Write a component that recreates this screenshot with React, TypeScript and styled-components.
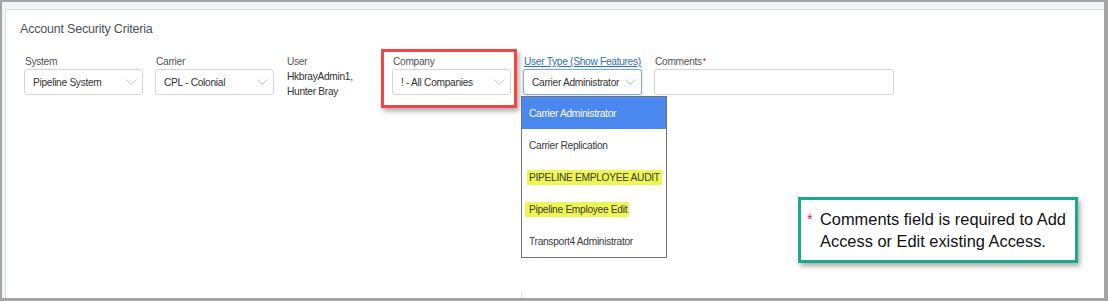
import React from "react";
import styled, { createGlobalStyle } from "styled-components";

const Global = createGlobalStyle`
  html, body { margin: 0; padding: 0; background: #fff; }
  * { box-sizing: border-box; }
  body { font-family: "Liberation Sans", Arial, sans-serif; }
`;

const Frame = styled.div`
  width: 1108px;
  height: 301px;
  border: 2px solid #a5a5a5;
  border-right-width: 4px;
  border-bottom-width: 3px;
  background: #f3f4f6;
  padding: 7px 0 0 3px;
  display: flex;
`;

const Panel = styled.div`
  flex: 1;
  position: relative;
  background: #fff;
  border-top: 1px solid #dadee3;
  border-left: 1px solid #dbe2ea;
  padding: 11px 0 0 14px;
`;

const Title = styled.div`
  font-size: 12.5px;
  letter-spacing: -0.2px;
  line-height: 16px;
  color: #4c5157;
`;

const FieldRow = styled.div`
  display: grid;
  grid-template-columns: 119px 119px 94px 119px 119px 240px;
  column-gap: 12px;
  align-items: start;
  margin: 18px 0 0 4px;
  font-size: 10.2px;
  letter-spacing: -0.3px;
`;

const Cell = styled.div`
  position: relative;
`;

const Label = styled.div<{ $link?: boolean }>`
  line-height: 13px;
  height: 14px;
  padding-left: 1px;
  color: ${(p) => (p.$link ? "#2d6fb8" : "#555")};
  text-decoration: ${(p) => (p.$link ? "underline" : "none")};
  white-space: nowrap;
`;

const Req = styled.span`
  color: #c8102e;
  font-size: 9px;
  vertical-align: top;
  margin-left: 1px;
`;

const SelectBox = styled.div<{ $focus?: boolean }>`
  height: 26px;
  border: 1px solid ${(p) => (p.$focus ? "#86a9d6" : "#d5d5d5")};
  border-radius: 3px;
  box-shadow: ${(p) => (p.$focus ? "0 0 2px rgba(80,130,200,0.45)" : "none")};
  display: flex;
  align-items: center;
  justify-content: space-between;
  padding: 0 5px 0 8px;
  color: #333;
  background: #fff;
  white-space: nowrap;
`;

const TextInput = styled.div`
  height: 26px;
  border: 1px solid #d5d5d5;
  border-radius: 3px;
  background: #fff;
`;

const UserText = styled.div`
  line-height: 15px;
  color: #333;
  padding-left: 1px;
`;

const Chevron = () => (
  <svg width="11" height="7" viewBox="0 0 11 7">
    <polyline points="0.5,0.5 5.5,5.5 10.5,0.5" fill="none" stroke="#c4c4c4" strokeWidth="1" />
  </svg>
);

const RedFrame = styled.div`
  position: absolute;
  left: -11px;
  top: -6px;
  width: 136px;
  height: 59px;
  border: 3px solid #ef4646;
  box-shadow: 2px 3px 5px rgba(0, 0, 0, 0.35);
  pointer-events: none;
`;

const Menu = styled.div`
  position: absolute;
  left: -2px;
  top: 41px;
  width: 146px;
  border: 1px solid #727272;
  background: #fff;
  overflow: hidden;
  z-index: 2;
`;

const MenuItem = styled.div<{ $active?: boolean }>`
  height: 32px;
  display: flex;
  align-items: center;
  padding-left: 7px;
  white-space: nowrap;
  color: ${(p) => (p.$active ? "#fff" : "#3a3a45")};
  background: ${(p) => (p.$active ? "#4a88f0" : "#fff")};
`;

const Mark = styled.span<{ $pad: number }>`
  background: #eef64f;
  padding: 1px 2px 1px ${(p) => p.$pad}px;
  margin-left: ${(p) => -p.$pad}px;
  line-height: 13px;
`;

const Callout = styled.div`
  position: absolute;
  left: 792px;
  top: 187px;
  width: 280px;
  height: 66px;
  border: 3px solid #18aa8b;
  background: #fff;
  box-shadow: 2px 3px 5px rgba(0, 0, 0, 0.35);
  display: flex;
  align-items: flex-start;
  padding: 8px 0 0 6px;
  color: #111;
  font-size: 16.4px;
  line-height: 22px;
`;

const Star = styled.span`
  color: #d4242c;
  font-size: 14px;
  width: 13px;
  flex: none;
`;

const Divider = styled.div`
  position: absolute;
  left: 515px;
  bottom: 0;
  width: 1px;
  height: 7px;
  background: #e4e4e4;
`;

export default function App() {
  return (
    <>
      <Global />
      <Frame>
        <Panel>
          <Title>Account Security Criteria</Title>
          <FieldRow>
            <Cell>
              <Label>System</Label>
              <SelectBox>
                Pipeline System
                <Chevron />
              </SelectBox>
            </Cell>
            <Cell>
              <Label>Carrier</Label>
              <SelectBox>
                CPL - Colonial
                <Chevron />
              </SelectBox>
            </Cell>
            <Cell>
              <Label>User</Label>
              <UserText>
                HkbrayAdmin1,
                <br />
                Hunter Bray
              </UserText>
            </Cell>
            <Cell>
              <Label>Company</Label>
              <SelectBox>
                ! - All Companies
                <Chevron />
              </SelectBox>
              <RedFrame />
            </Cell>
            <Cell>
              <Label $link>User Type (Show Features)</Label>
              <SelectBox $focus>
                Carrier Administrator
                <Chevron />
              </SelectBox>
              <Menu>
                <MenuItem $active>Carrier Administrator</MenuItem>
                <MenuItem>Carrier Replication</MenuItem>
                <MenuItem>
                  <Mark $pad={2}>PIPELINE EMPLOYEE AUDIT</Mark>
                </MenuItem>
                <MenuItem>
                  <Mark $pad={4}>Pipeline Employee Edit</Mark>
                </MenuItem>
                <MenuItem>Transport4 Administrator</MenuItem>
              </Menu>
            </Cell>
            <Cell>
              <Label>
                Comments<Req>*</Req>
              </Label>
              <TextInput />
            </Cell>
          </FieldRow>
          <Divider />
          <Callout>
            <Star>*</Star>
            <div>
              Comments field is required to Add
              <br />
              Access or Edit existing Access.
            </div>
          </Callout>
        </Panel>
      </Frame>
    </>
  );
}
